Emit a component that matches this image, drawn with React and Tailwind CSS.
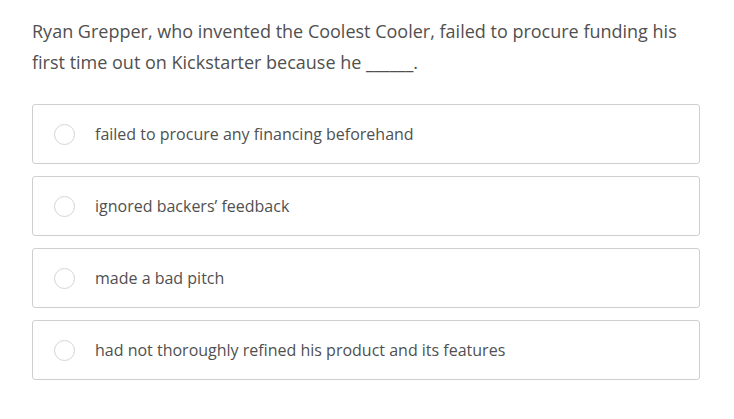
import { useState } from 'react';

const options = [
  'failed to procure any financing beforehand',
  'ignored backers\u2019 feedback',
  'made a bad pitch',
  'had not thoroughly refined his product and its features',
];

export default function App() {
  const [picked, setPicked] = useState(null);

  return (
    <div className="min-h-[419px] bg-white px-[32px] pt-[16px] font-['Open_Sans',sans-serif] text-[#505050]">
      <p className="w-[668px] text-[18px] leading-[31px]">
        Ryan Grepper, who invented the Coolest Cooler, failed to procure funding his first time out on
        Kickstarter because he ______.
      </p>
      <div className="mt-[26px] flex w-[668px] flex-col gap-[12px]">
        {options.map((opt, i) => (
          <label
            key={i}
            className="flex h-[60px] cursor-pointer items-center rounded-[3px] border border-[#cfcfcf] pl-[21px]"
            onClick={() => setPicked(i)}
          >
            <span
              className={
                'h-[21px] w-[21px] shrink-0 rounded-full border ' +
                (picked === i ? 'border-[#4a90e2] bg-[#4a90e2]' : 'border-[#d4d4d4] bg-white')
              }
            />
            <span className="ml-[20px] text-[16px]">{opt}</span>
          </label>
        ))}
      </div>
    </div>
  );
}
